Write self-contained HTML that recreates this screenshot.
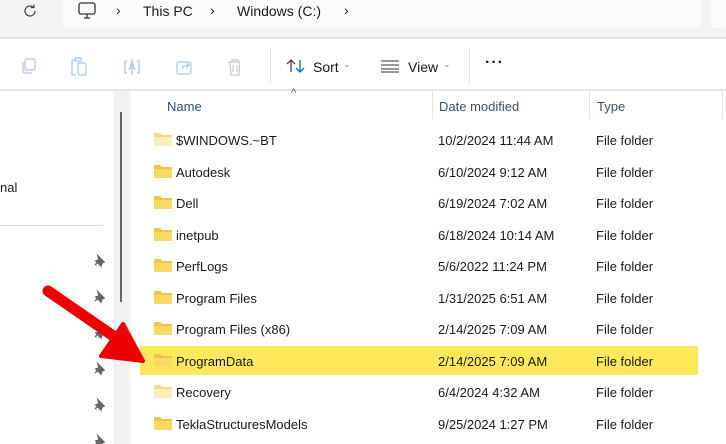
<!DOCTYPE html>
<html><head><style>
body{margin:0;width:726px;height:444px;overflow:hidden;background:#fff;font-family:"Liberation Sans",sans-serif;position:relative;color:#1a1a1a}
.a{position:absolute}
.t{font-size:13px;white-space:nowrap}
</style></head><body>
<div class="a" style="left:0;top:0;width:726px;height:38px;background:#f3f3f3"></div>
<div class="a" style="left:63px;top:0;width:638px;height:28px;background:#fbfbfb;border-radius:0 0 6px 6px"></div>
<div class="a" style="left:710px;top:0;width:16px;height:28px;background:#fbfbfb;border-radius:0 0 0 6px"></div>
<div class="a" style="left:0;top:37px;width:726px;height:2px;background:#e3e3e3"></div>
<svg class="a" style="left:22px;top:3px" width="16" height="16" viewBox="0 0 16 16"><path d="M13 8a5 5 0 1 1-1.5-3.6M12 1.5v3h-3" fill="none" stroke="#444" stroke-width="1.2"/></svg>
<svg class="a" style="left:77px;top:2px" width="20" height="18" viewBox="0 0 20 18"><rect x="2" y="1" width="16" height="11" rx="2" fill="none" stroke="#333" stroke-width="1.3"/><path d="M7 16h6M10 12v4" stroke="#333" stroke-width="1.3"/></svg>
<div class="a t" style="left:116px;top:2px;font-size:14px">›</div>
<div class="a t" style="left:143px;top:3px;font-size:14px">This PC</div>
<div class="a t" style="left:210px;top:2px;font-size:14px">›</div>
<div class="a t" style="left:237px;top:3px;font-size:14px">Windows (C:)</div>
<div class="a t" style="left:344px;top:2px;font-size:14px">›</div>
<svg class="a" style="left:20px;top:56px" width="220" height="22" viewBox="0 0 220 22" fill="none" stroke="#a8c6e8" stroke-width="1.2">
<rect x="5" y="3" width="10" height="11" rx="2"/><path d="M3 6v9a2 2 0 0 0 2 2h7"/>
<path d="M55 4h-2a1 1 0 0 0-1 1v13a1 1 0 0 0 1 1h3"/><rect x="58" y="7" width="8" height="12" rx="1.5"/><rect x="55" y="2" width="6" height="3"/>
<path d="M107 5h-2v12h2M117 5h2v12h-2"/><path d="M109 14l3-8 3 8M110 12h4"/><path d="M112 3v16"/>
<rect x="157" y="6" width="14" height="12" rx="2"/><path d="M162 13c1-3 4-4 7-4M166 6l3 3-3 3"/>
<path d="M208 6h14M212 6v-2h6v2M210 6l1 13h8l1-13M213 9v7M217 9v7" stroke="#c8c8c8"/>
</svg>
<div class="a" style="left:270px;top:48px;width:1px;height:35px;background:#e0e0e0"></div>
<svg class="a" style="left:286px;top:57px" width="20" height="18" viewBox="0 0 20 18"><path d="M5 15V3M1 7l4-4 4 4" fill="none" stroke="#333" stroke-width="1.2"/><path d="M14 3v12M10 11l4 4 4-4" fill="none" stroke="#0067c0" stroke-width="1.3"/></svg>
<div class="a t" style="left:313px;top:59px;font-size:14px">Sort</div>
<div class="a t" style="left:343px;top:59px;font-size:9px;color:#888">⌄</div>
<svg class="a" style="left:381px;top:59px" width="18" height="14"><path d="M0 2h18M0 6h18M0 10h18M0 13h18" stroke="#333" stroke-width="1"/></svg>
<div class="a t" style="left:408px;top:59px;font-size:14px">View</div>
<div class="a t" style="left:443px;top:59px;font-size:9px;color:#888">⌄</div>
<div class="a" style="left:469px;top:48px;width:1px;height:35px;background:#e0e0e0"></div>
<div class="a t" style="left:485px;top:54px;font-size:16px;font-weight:bold;letter-spacing:1px">···</div>
<div class="a" style="left:0;top:89px;width:726px;height:2px;background:#e6e6e6"></div>
<div class="a t" style="left:0;top:180px">nal</div>
<div class="a" style="left:0;top:225px;width:103px;height:1px;background:#ddd"></div>
<div class="a" style="left:113px;top:91px;width:16px;height:353px;background:#f2f2f2"></div>
<div class="a" style="left:120px;top:112px;width:2px;height:190px;background:#666"></div>
<div class="a" style="left:129px;top:91px;width:2px;height:353px;background:#f7f7f7"></div>
<svg class="a" style="left:94px;top:252px" width="14" height="192" fill="#666">
<g id="p"><path d="M4 4l6 6-2 1-1 3-5-5 3-1z M4 10l-3 3" stroke="#666" stroke-width="1.5"/></g>
<use href="#p" y="36"/><use href="#p" y="72"/><use href="#p" y="108"/><use href="#p" y="144"/><use href="#p" y="180"/>
</svg>
<div class="a" style="left:291px;top:87px;font-size:11px;color:#555">^</div>
<div class="a t" style="left:167px;top:99px;color:#35506e">Name</div>
<div class="a" style="left:432px;top:91px;width:1px;height:28px;background:#e5e5e5"></div>
<div class="a t" style="left:439px;top:99px;color:#35506e">Date modified</div>
<div class="a" style="left:589px;top:91px;width:1px;height:28px;background:#e5e5e5"></div>
<div class="a t" style="left:597px;top:99px;color:#35506e">Type</div>
<div class="a" style="left:722px;top:91px;width:1px;height:28px;background:#e5e5e5"></div>
<div class="a" style="left:140px;top:346px;width:558px;height:29px;background:#fce85a"></div>
<div class="a" style="left:0;top:0">
<div class="a t" style="left:176px;top:133px">$WINDOWS.~BT</div><div class="a t" style="left:438px;top:133px">10/2/2024 11:44 AM</div><div class="a t" style="left:596px;top:133px">File folder</div>
<div class="a t" style="left:176px;top:165px">Autodesk</div><div class="a t" style="left:438px;top:165px">6/10/2024 9:12 AM</div><div class="a t" style="left:596px;top:165px">File folder</div>
<div class="a t" style="left:176px;top:196px">Dell</div><div class="a t" style="left:438px;top:196px">6/19/2024 7:02 AM</div><div class="a t" style="left:596px;top:196px">File folder</div>
<div class="a t" style="left:176px;top:228px">inetpub</div><div class="a t" style="left:438px;top:228px">6/18/2024 10:14 AM</div><div class="a t" style="left:596px;top:228px">File folder</div>
<div class="a t" style="left:176px;top:259px">PerfLogs</div><div class="a t" style="left:438px;top:259px">5/6/2022 11:24 PM</div><div class="a t" style="left:596px;top:259px">File folder</div>
<div class="a t" style="left:176px;top:291px">Program Files</div><div class="a t" style="left:438px;top:291px">1/31/2025 6:51 AM</div><div class="a t" style="left:596px;top:291px">File folder</div>
<div class="a t" style="left:176px;top:322px">Program Files (x86)</div><div class="a t" style="left:438px;top:322px">2/14/2025 7:09 AM</div><div class="a t" style="left:596px;top:322px">File folder</div>
<div class="a t" style="left:176px;top:354px">ProgramData</div><div class="a t" style="left:438px;top:354px">2/14/2025 7:09 AM</div><div class="a t" style="left:596px;top:354px">File folder</div>
<div class="a t" style="left:176px;top:385px">Recovery</div><div class="a t" style="left:438px;top:385px">6/4/2024 4:32 AM</div><div class="a t" style="left:596px;top:385px">File folder</div>
<div class="a t" style="left:176px;top:417px">TeklaStructuresModels</div><div class="a t" style="left:438px;top:417px">9/25/2024 1:27 PM</div><div class="a t" style="left:596px;top:417px">File folder</div>
</div>
<svg class="a" style="left:0;top:0" width="726" height="444">
<defs><g id="fd"><path d="M0 1a1 1 0 0 1 1-1h5l2 2h9a1 1 0 0 1 1 1v9a1 1 0 0 1-1 1H1a1 1 0 0 1-1-1z" fill="#f3c24a"/><path d="M0 4h18v8a1 1 0 0 1-1 1H1a1 1 0 0 1-1-1z" fill="#fcd865"/></g>
<g id="fl"><path d="M0 1a1 1 0 0 1 1-1h5l2 2h9a1 1 0 0 1 1 1v9a1 1 0 0 1-1 1H1a1 1 0 0 1-1-1z" fill="#f5d98a"/><path d="M0 4h18v8a1 1 0 0 1-1 1H1a1 1 0 0 1-1-1z" fill="#fdedb8"/></g></defs>
<use href="#fl" x="154" y="133"/><use href="#fd" x="154" y="165"/><use href="#fd" x="154" y="196"/><use href="#fd" x="154" y="228"/><use href="#fd" x="154" y="259"/><use href="#fd" x="154" y="291"/><use href="#fd" x="154" y="322"/><use href="#fd" x="154" y="354"/><use href="#fl" x="154" y="385"/><use href="#fd" x="154" y="417"/>
<path d="M48 291L122 342" stroke="#e00" stroke-width="11" stroke-linecap="round"/>
<path d="M143 361L101 356L123 324Z" fill="#e00" stroke="#e00" stroke-width="4" stroke-linejoin="round"/>
</svg>
</body></html>
